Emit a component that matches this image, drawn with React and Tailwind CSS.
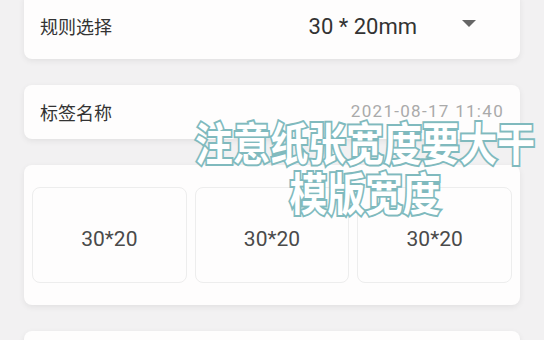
import React from "react";

const cjk = "font-['Noto_Sans_CJK_SC',sans-serif]";
const num = "font-['Roboto','Noto_Sans_CJK_SC',sans-serif]";

function Card({ className = "", children }) {
  return (
    <div
      className={`bg-[#fefdfd] rounded-lg shadow-[0_2px_6px_rgba(0,0,0,0.07)] ${className}`}>
      {children}
    </div>
  );
}

export default function App() {
  const sizes = ["30*20", "30*20", "30*20"];

  return (
    <div className="relative w-[544px] h-[340px] overflow-hidden bg-[#f2f1f2]">
      <div className="flex flex-col gap-[26px] px-6">
        {/* 规则选择 */}
        <Card className="-mt-[7px] h-[66px] flex items-center pl-4 pr-[44px]">
          <span className={`${cjk} text-[18px] text-[#333]`}>规则选择</span>
          <span className={`${num} ml-auto text-[22px] text-[#333]`}>30 * 20mm</span>
          <svg width="14" height="8" viewBox="0 0 14 8" className="ml-[45px] mt-[-4px]">
            <path d="M0 0 L14 0 L7 7 Z" fill="#666" />
          </svg>
        </Card>

        {/* 标签名称 */}
        <Card className="h-[54px] flex items-center pl-4 pr-[16px]">
          <span className={`${cjk} text-[18px] text-[#333]`}>标签名称</span>
          <span className={`${num} ml-auto text-[17px] tracking-[1.3px] text-[#aaa]`}>
            2021-08-17 11:40
          </span>
        </Card>

        {/* 模板 */}
        <Card className="h-[140px] px-2 py-[22px]">
          <div className="grid grid-cols-3 gap-2 h-full">
            {sizes.map((s, i) => (
              <div
                key={i}
                className="border border-[#ededed] rounded-lg flex items-center justify-center pt-[9px]">
                <span className={`${num} text-[21px] text-[#4a4a4a]`}>{s}</span>
              </div>
            ))}
          </div>
        </Card>

        <Card className="h-[60px]" />
      </div>

      {/* 字幕 */}
      <div
        className={`absolute left-[125px] top-[117px] w-[480px] whitespace-nowrap text-center ${cjk} font-bold text-[45px] leading-[50px] text-white scale-x-[0.84] [-webkit-text-stroke:4px_#80babe] [paint-order:stroke_fill]`}>
        <div>注意纸张宽度要大干</div>
        <div>模版宽度</div>
      </div>
    </div>
  );
}
